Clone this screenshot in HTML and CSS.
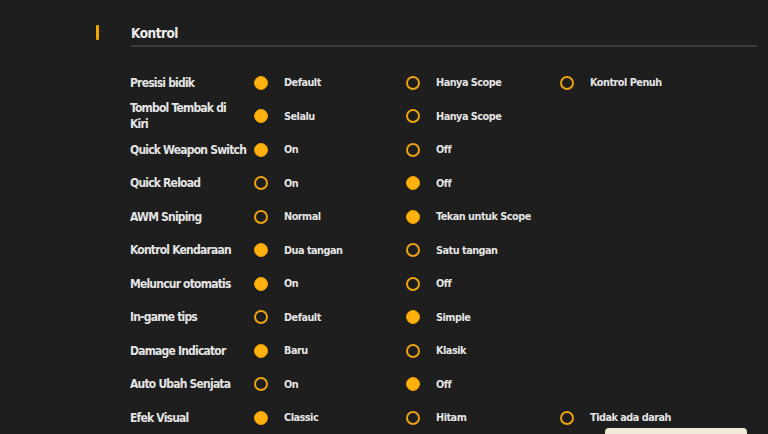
FILE: index.html
```html
<!DOCTYPE html>
<html lang="id">
<head>
  <meta charset="UTF-8" />
  <meta name="viewport" content="width=device-width, initial-scale=1" />
  <title>Pengaturan - Kontrol</title>
  <link rel="stylesheet" href="styles.css">
</head>
<body>
  <div class="panel">
    <header class="section-head">
      <span class="accent"></span>
      <h1 class="title">Kontrol</h1>
    </header>
    <div class="divider"></div>

    <div class="list">
      <div class="row">
        <div class="label">Presisi bidik</div>
        <div class="opt"><span class="radio on"></span>Default</div>
        <div class="opt"><span class="radio"></span>Hanya Scope</div>
        <div class="opt"><span class="radio"></span>Kontrol Penuh</div>
      </div>
      <div class="row">
        <div class="label">Tombol Tembak di<br>Kiri</div>
        <div class="opt"><span class="radio on"></span>Selalu</div>
        <div class="opt"><span class="radio"></span>Hanya Scope</div>
      </div>
      <div class="row">
        <div class="label">Quick Weapon Switch</div>
        <div class="opt"><span class="radio on"></span>On</div>
        <div class="opt"><span class="radio"></span>Off</div>
      </div>
      <div class="row">
        <div class="label">Quick Reload</div>
        <div class="opt"><span class="radio"></span>On</div>
        <div class="opt"><span class="radio on"></span>Off</div>
      </div>
      <div class="row">
        <div class="label">AWM Sniping</div>
        <div class="opt"><span class="radio"></span>Normal</div>
        <div class="opt"><span class="radio on"></span>Tekan untuk Scope</div>
      </div>
      <div class="row">
        <div class="label">Kontrol Kendaraan</div>
        <div class="opt"><span class="radio on"></span>Dua tangan</div>
        <div class="opt"><span class="radio"></span>Satu tangan</div>
      </div>
      <div class="row">
        <div class="label">Meluncur otomatis</div>
        <div class="opt"><span class="radio on"></span>On</div>
        <div class="opt"><span class="radio"></span>Off</div>
      </div>
      <div class="row">
        <div class="label">In-game tips</div>
        <div class="opt"><span class="radio"></span>Default</div>
        <div class="opt"><span class="radio on"></span>Simple</div>
      </div>
      <div class="row">
        <div class="label">Damage Indicator</div>
        <div class="opt"><span class="radio on"></span>Baru</div>
        <div class="opt"><span class="radio"></span>Klasik</div>
      </div>
      <div class="row">
        <div class="label">Auto Ubah Senjata</div>
        <div class="opt"><span class="radio"></span>On</div>
        <div class="opt"><span class="radio on"></span>Off</div>
      </div>
      <div class="row">
        <div class="label">Efek Visual</div>
        <div class="opt"><span class="radio on"></span>Classic</div>
        <div class="opt"><span class="radio"></span>Hitam</div>
        <div class="opt"><span class="radio"></span>Tidak ada darah</div>
      </div>
    </div>

    <div class="footer">
      <button class="btn-reset"></button>
    </div>
  </div>
</body>
</html>
```

FILE: styles.css
```css
/* Base */
* {
  box-sizing: border-box;
}
html, body {
  height: 100%;
}
body {
  margin: 0;
  background: #1e1e1e;
  color: #e4e4e4;
  font-family: "DejaVu Sans Condensed", "DejaVu Sans", sans-serif;
  font-stretch: condensed;
  font-weight: bold;
  overflow: hidden;
}

.panel {
  padding: 24px 11px 0 96px;
}

/* Titre de section */
.section-head {
  display: flex;
  align-items: center;
  height: 17px;
}
.accent {
  width: 3px;
  height: 15px;
  background: #f0a800;
  border-radius: 1px;
}
.title {
  margin: 0 0 0 32px;
  font-size: 13.5px;
  letter-spacing: -0.5px;
  color: #ececec;
}
.divider {
  margin: 4px 0 0 35px;
  height: 2px;
  background: #3a3a3a;
}

/* Liste des options */
.list {
  margin: 19px 0 0 34px;
  height: 359px;
  overflow: hidden;
}
.row {
  display: grid;
  grid-template-columns: 124px 152px 154px 1fr;
  align-items: center;
  height: 33.5px;
}
.label {
  font-size: 12px;
  line-height: 16px;
  letter-spacing: -0.8px;
  white-space: nowrap;
}
.opt {
  display: flex;
  align-items: center;
  font-size: 10.8px;
  letter-spacing: -0.5px;
  white-space: nowrap;
}
.radio {
  flex: none;
  width: 14px;
  height: 14px;
  margin-right: 16px;
  border-radius: 50%;
  border: 2.5px solid #e9a212;
  background: #1e1e1e;
}
.radio.on {
  border: 1px solid #f2a000;
  background: #ffb20f;
}

/* Bouton du bas */
.footer {
  display: flex;
  justify-content: flex-end;
  padding-right: 10px;
  margin-top: 3px;
}
.btn-reset {
  width: 142px;
  height: 32px;
  border: none;
  border-radius: 4px;
  background: #f2ead9;
}
```
